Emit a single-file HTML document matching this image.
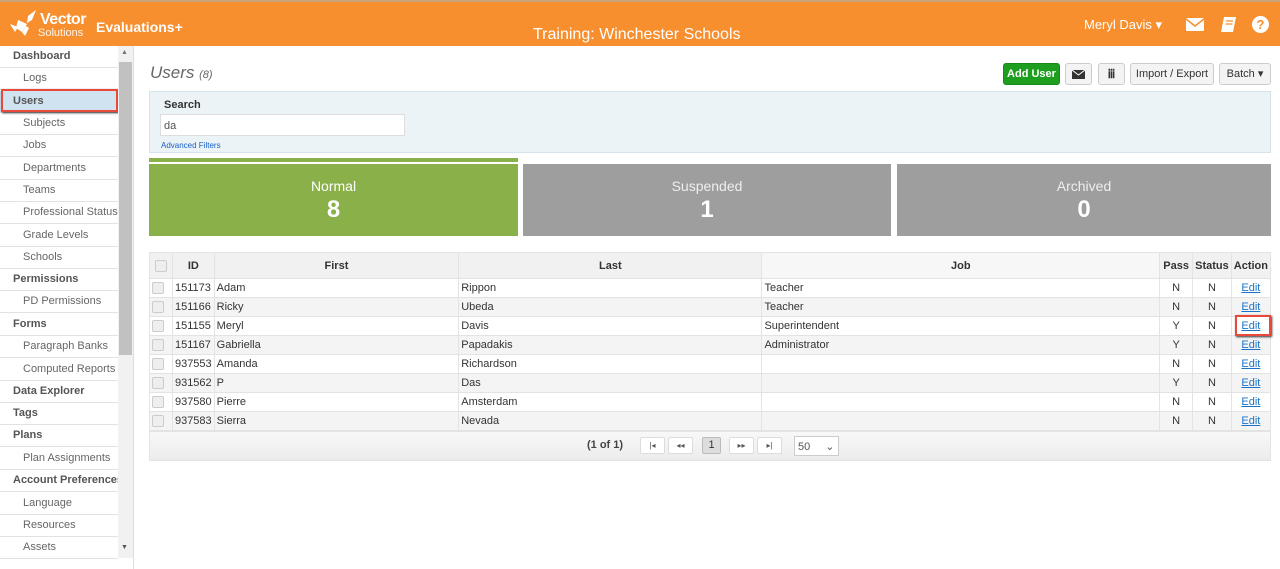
<!DOCTYPE html>
<html><head><style>
*{box-sizing:border-box;margin:0;padding:0}
body{width:1280px;height:569px;overflow:hidden;background:#fff;font-family:"Liberation Sans",Arial,sans-serif;font-size:11px;color:#333;position:relative}
.hdr{position:absolute;left:0;top:0;width:1280px;height:46px;background:#f78f2e;border-top:2px solid #c9a27a;color:#fff}
.abs{position:absolute}
.side{position:absolute;left:0;top:46px;width:134px;height:523px;border-right:1px solid #ddd;background:#fff}
.si{position:absolute;left:0;width:118px;height:22px;border-bottom:1px solid #e2e2e2;line-height:21px;font-size:11px;color:#666;white-space:nowrap;overflow:hidden}
.si.b{font-weight:bold;color:#555;padding-left:13px}
.si.s{padding-left:23px}
.btn{position:absolute;top:63px;height:22px;border:1px solid #ccc;border-radius:3px;background:#f3f3f3;font-size:11px;line-height:20px;text-align:center;color:#333}
.tile{position:absolute;top:164px;height:72px;color:#fff;text-align:center}
.tile .l{font-size:14px;margin-top:14px}
.tile .n{font-size:24px;font-weight:bold;margin-top:2px}
table{position:absolute;left:149px;top:252px;width:1122px;border-collapse:collapse;font-size:11px}
td,th{border:1px solid #e3e3e3;height:19px;padding:0 2px;white-space:nowrap}
th{height:26px;background:#f1f1f1;font-weight:bold;color:#333}
tr:nth-child(odd) td{background:#f4f4f4}
.cb{display:inline-block;width:12px;height:12px;border:1px solid #ccc;border-radius:2px;background:#eee;vertical-align:middle}
.c{text-align:center}
a{color:#1a73c8;text-decoration:underline}
.pb{position:absolute;top:437px;height:17px;border:1px solid #ddd;border-radius:2px;background:#fff;font-size:8px;text-align:center;line-height:15px;color:#555}
</style></head><body>
<div class="hdr">
 <svg class="abs" style="left:8px;top:8px" width="36" height="30" viewBox="0 0 36 30"><g fill="#fff"><path d="M2 14l8 3-3 5z"/><path d="M10 10l9 4-5 8-6-4z"/><path d="M20 6l8-6-4 10-5 3z"/><path d="M14 22l4-6 3 2-4 8z"/></g></svg>
 <div class="abs" style="left:40px;top:9px;font-size:16px;font-weight:bold;letter-spacing:-0.5px">Vector</div>
 <div class="abs" style="left:38px;top:25px;font-size:11px;opacity:.9">Solutions</div>
 <div class="abs" style="left:96px;top:17px;font-size:14px;font-weight:bold">Evaluations+</div>
 <div class="abs" style="left:533px;top:24px;font-size:16px">Training: Winchester Schools</div>
 <div class="abs" style="left:1084px;top:15px;font-size:13px">Meryl Davis ▾</div>
 <svg class="abs" style="left:1186px;top:16px" width="18" height="13" viewBox="0 0 18 13"><rect width="18" height="13" rx="1" fill="#fff"/><path d="M0 1l9 7 9-7" stroke="#f78f2e" stroke-width="1.5" fill="none"/></svg>
 <svg class="abs" style="left:1220px;top:14px" width="17" height="17" viewBox="0 0 17 17"><path d="M4 1h12l-3 15H1z" fill="#fff"/><path d="M6 5h7M5.5 8h7" stroke="#f78f2e" stroke-width="1.2"/></svg>
 <div class="abs" style="left:1252px;top:14px;width:17px;height:17px;border-radius:50%;background:#fff;color:#f78f2e;font-weight:bold;font-size:13px;text-align:center;line-height:17px">?</div>
</div>
<div class="side">
 <div class="si b" style="top:0">Dashboard</div>
 <div class="si s" style="top:22px">Logs</div>
 <div class="si b" style="top:45px;background:#cfe3f1">Users</div>
 <div class="si s" style="top:67px">Subjects</div>
 <div class="si s" style="top:89px">Jobs</div>
 <div class="si s" style="top:112px">Departments</div>
 <div class="si s" style="top:134px">Teams</div>
 <div class="si s" style="top:156px">Professional Status</div>
 <div class="si s" style="top:179px">Grade Levels</div>
 <div class="si s" style="top:201px">Schools</div>
 <div class="si b" style="top:223px">Permissions</div>
 <div class="si s" style="top:245px">PD Permissions</div>
 <div class="si b" style="top:268px">Forms</div>
 <div class="si s" style="top:290px">Paragraph Banks</div>
 <div class="si s" style="top:313px">Computed Reports</div>
 <div class="si b" style="top:335px">Data Explorer</div>
 <div class="si b" style="top:357px">Tags</div>
 <div class="si b" style="top:379px">Plans</div>
 <div class="si s" style="top:402px">Plan Assignments</div>
 <div class="si b" style="top:424px">Account Preferences</div>
 <div class="si s" style="top:447px">Language</div>
 <div class="si s" style="top:469px">Resources</div>
 <div class="si s" style="top:491px">Assets</div>
 <div class="abs" style="left:1px;top:43px;width:117px;height:23px;border:2px solid #e8493b;box-shadow:1px 1px 2px #333"></div>
 <div class="abs" style="left:118px;top:0;width:15px;height:512px;background:#f1f1f1"></div>
 <div class="abs" style="left:119px;top:16px;width:13px;height:293px;background:#c1c1c1"></div>
 <div class="abs" style="left:121px;top:3px;font-size:7px;color:#777">▲</div>
 <div class="abs" style="left:121px;top:498px;font-size:7px;color:#555">▼</div>
</div>
<div class="abs" style="left:150px;top:63px;font-size:17px;font-style:italic;color:#666">Users <span style="font-size:11px">(8)</span></div>
<div class="btn" style="left:1003px;width:57px;background:#1e9e1e;border-color:#178a17;color:#fff;font-weight:bold">Add User</div>
<div class="btn" style="left:1065px;width:27px"><svg width="13" height="9" style="margin-top:6px" viewBox="0 0 13 9"><rect width="13" height="9" fill="#333"/><path d="M0 0l6.5 5 6.5-5" stroke="#fff" fill="none"/></svg></div>
<div class="btn" style="left:1098px;width:27px;font-weight:bold;font-size:12px">ⅲ</div>
<div class="btn" style="left:1130px;width:84px">Import / Export</div>
<div class="btn" style="left:1219px;width:52px">Batch ▾</div>
<div class="abs" style="left:149px;top:91px;width:1122px;height:62px;background:#ebf3f7;border:1px solid #d5e3ea"></div>
<div class="abs" style="left:164px;top:99px;font-weight:bold;font-size:11px">Search</div>
<div class="abs" style="left:160px;top:114px;width:245px;height:22px;background:#fff;border:1px solid #ddd;padding:5px 3px;font-size:11px;color:#555">da</div>
<div class="abs" style="left:161px;top:141px;font-size:8px;color:#1a5fc8">Advanced Filters</div>
<div class="abs" style="left:149px;top:158px;width:369px;height:4px;background:#8ab04a"></div>
<div class="tile" style="left:149px;width:369px;background:#8ab04a"><div class="l">Normal</div><div class="n">8</div></div>
<div class="tile" style="left:523px;width:368px;background:#9e9e9e"><div class="l" style="color:#eee">Suspended</div><div class="n">1</div></div>
<div class="tile" style="left:897px;width:374px;background:#9e9e9e"><div class="l" style="color:#eee">Archived</div><div class="n">0</div></div>
<table>
<tr><th style="width:23px"><span class="cb"></span></th><th style="width:39px">ID</th><th style="width:246px">First</th><th style="width:305px">Last</th><th style="width:400px;background:#f7f7f7">Job</th><th style="width:33px">Pass</th><th style="width:38px">Status</th><th>Action</th></tr>
<tr><td><span class="cb"></span></td><td>151173</td><td>Adam</td><td>Rippon</td><td>Teacher</td><td class="c">N</td><td class="c">N</td><td class="c"><a>Edit</a></td></tr>
<tr><td><span class="cb"></span></td><td>151166</td><td>Ricky</td><td>Ubeda</td><td>Teacher</td><td class="c">N</td><td class="c">N</td><td class="c"><a>Edit</a></td></tr>
<tr><td><span class="cb"></span></td><td>151155</td><td>Meryl</td><td>Davis</td><td>Superintendent</td><td class="c">Y</td><td class="c">N</td><td class="c"><a>Edit</a></td></tr>
<tr><td><span class="cb"></span></td><td>151167</td><td>Gabriella</td><td>Papadakis</td><td>Administrator</td><td class="c">Y</td><td class="c">N</td><td class="c"><a>Edit</a></td></tr>
<tr><td><span class="cb"></span></td><td>937553</td><td>Amanda</td><td>Richardson</td><td></td><td class="c">N</td><td class="c">N</td><td class="c"><a>Edit</a></td></tr>
<tr><td><span class="cb"></span></td><td>931562</td><td>P</td><td>Das</td><td></td><td class="c">Y</td><td class="c">N</td><td class="c"><a>Edit</a></td></tr>
<tr><td><span class="cb"></span></td><td>937580</td><td>Pierre</td><td>Amsterdam</td><td></td><td class="c">N</td><td class="c">N</td><td class="c"><a>Edit</a></td></tr>
<tr><td><span class="cb"></span></td><td>937583</td><td>Sierra</td><td>Nevada</td><td></td><td class="c">N</td><td class="c">N</td><td class="c"><a>Edit</a></td></tr>
</table>
<div class="abs" style="left:1235px;top:315px;width:36px;height:21px;border:2px solid #e8493b;box-shadow:1px 1px 2px #333"></div>
<div class="abs" style="left:149px;top:431px;width:1122px;height:30px;background:linear-gradient(#f8f8f8,#ececec);border:1px solid #e3e3e3"></div>
<div class="abs" style="left:587px;top:439px;font-weight:bold;font-size:11px;color:#444">(1 of 1)</div>
<div class="pb" style="left:640px;width:25px">|◂</div>
<div class="pb" style="left:668px;width:25px">◂◂</div>
<div class="pb" style="left:702px;width:19px;background:#ddd;border-color:#bbb;font-size:11px;color:#333">1</div>
<div class="pb" style="left:729px;width:25px">▸▸</div>
<div class="pb" style="left:757px;width:25px">▸|</div>
<div class="abs" style="left:794px;top:436px;width:45px;height:20px;border:1px solid #ccc;background:#fff;font-size:11px;color:#555;padding:3px 0 0 3px">50 <span style="margin-left:12px">⌄</span></div>
</body></html>
